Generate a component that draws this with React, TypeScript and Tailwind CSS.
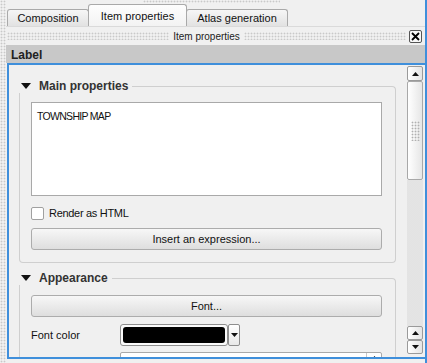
import React from "react";

const font = "font-['Liberation_Sans',Arial,sans-serif]";
const dots = "bg-[radial-gradient(circle,#c9c9c9_0.8px,transparent_1.1px)] bg-[length:3px_3px]";

function DownTri({ w = 10, h = 6 }: { w?: number; h?: number }) {
  return (
    <svg width={w} height={h} viewBox={`0 0 ${w} ${h}`} className="shrink-0">
      <polygon points={`0,0 ${w},0 ${w / 2},${h}`} fill="#111" />
    </svg>
  );
}

function UpTri({ w = 7, h = 4 }: { w?: number; h?: number }) {
  return (
    <svg width={w} height={h} viewBox={`0 0 ${w} ${h}`} className="shrink-0">
      <polygon points={`0,${h} ${w},${h} ${w / 2},0`} fill="#111" />
    </svg>
  );
}

function Tab({ label, active, w }: { label: string; active?: boolean; w: string }) {
  return active ? (
    <div className={`${w} h-[22px] flex justify-center items-start pt-[3px] border border-b-0 border-[#a9a9a9] rounded-t-[3px] bg-[linear-gradient(#fdfdfd,#f3f3f3)] -mx-px z-10 text-[11px] text-[#111]`}>
      {label}
    </div>
  ) : (
    <div className={`${w} h-[17px] flex justify-center items-center border border-b-0 border-[#a9a9a9] rounded-t-[3px] bg-[linear-gradient(#f6f6f6,#e2e2e2)] text-[11px] text-[#111]`}>
      {label}
    </div>
  );
}

function GroupBox({ title, children }: { title: string; children: React.ReactNode }) {
  return (
    <div className="flex flex-col">
      <div className="flex items-center h-[14px]">
        <div className="pl-[2px] pr-[8px]">
          <DownTri />
        </div>
        <div className="font-bold text-[12px] text-[#333] pr-[4px]">{title}</div>
        <div className="flex-1 self-end h-[7px] border-t border-r border-[#cfcfcf] rounded-tr-[4px]" />
      </div>
      <div className="border-l border-r border-b border-[#cfcfcf] rounded-b-[4px] pl-[11px] pr-[13px]">
        {children}
      </div>
    </div>
  );
}

function PushButton({ label }: { label: string }) {
  return (
    <div className="h-[22px] flex items-center justify-center border border-[#acacac] rounded-[3px] bg-[linear-gradient(#f7f7f7,#dedede)] text-[11px] text-[#111]">
      {label}
    </div>
  );
}

function ScrollBtn({ up }: { up?: boolean }) {
  return (
    <div className="h-[14px] w-[16px] flex items-center justify-center border border-[#9a9a9a] rounded-[2px] bg-[linear-gradient(90deg,#ffffff,#e4e4e4)]">
      {up ? <UpTri /> : <DownTri w={7} h={4} />}
    </div>
  );
}

export default function App() {
  return (
    <div className={`w-[427px] h-[363px] overflow-hidden flex bg-[#f0f0f0] border-r-2 border-[#3f8fdb] ${font}`}>
      <div className={`w-[6px] h-full ${dots}`} />
      <div className="w-[419px] flex flex-col">
        <div className="h-[4px] flex">
          <div className={`ml-[137px] w-[137px] h-[3px] ${dots}`} />
        </div>
        {/* tabs */}
        <div className="h-[23px] flex items-end pl-px border-b border-[#dadada]">
          <Tab label="Composition" w="w-[82px]" />
          <Tab label="Item properties" w="w-[99px]" active />
          <Tab label="Atlas generation" w="w-[102px]" />
        </div>
        {/* dock title */}
        <div className="h-[18px] flex items-center">
          <div className="flex-1 flex items-center gap-[4px] pl-px">
            <div className={`flex-1 h-[8px] ${dots}`} />
            <div className="text-[10px] text-[#222]">Item properties</div>
            <div className={`flex-1 h-[8px] ${dots}`} />
          </div>
          <div className="ml-[3px] mr-[3px] w-[13px] h-[13px] border border-[#555] rounded-[2px] bg-[#f8f8f8] flex items-center justify-center">
            <svg width="9" height="9" viewBox="0 0 9 9">
              <path d="M1 1 L8 8 M8 1 L1 8" stroke="#000" strokeWidth="1.8" />
            </svg>
          </div>
        </div>
        {/* Label bar */}
        <div className="h-[18px] bg-[#c8c8c8] flex items-center pl-[5px] pt-[2px] font-bold text-[12px] text-[#222]">
          Label
        </div>
        {/* scroll area */}
        <div className="h-[296px] ml-px flex border-l-2 border-t-2 border-b-2 border-[#3f8fdb]">
          <div className="flex-1 overflow-hidden pl-[10px] pr-[11px] pt-[14px] flex flex-col">
            <GroupBox title="Main properties">
              <div className="mt-[9px] h-[94px] bg-white border border-[#a9a9a9] pl-[5px] pt-[6px] text-[10.5px] tracking-[-0.7px] text-[#111]">
                TOWNSHIP MAP
              </div>
              <div className="mt-[11px] h-[12px] flex items-center gap-[5px]">
                <div className="w-[13px] h-[13px] bg-white border border-[#a0a0a0] rounded-[2px]" />
                <div className="text-[11px] text-[#111] tracking-[-0.3px]">Render as HTML</div>
              </div>
              <div className="mt-[9px] mb-[12px]">
                <PushButton label="Insert an expression..." />
              </div>
            </GroupBox>
            <div className="mt-[8px]">
              <GroupBox title="Appearance">
                <div className="mt-[10px]">
                  <PushButton label="Font..." />
                </div>
                <div className="mt-[7px] h-[22px] flex items-center">
                  <div className="w-[89px] text-[11px] text-[#111]">Font color</div>
                  <div className="w-[108px] h-[22px] border border-[#8e8e8e] rounded-[3px] bg-[#fafafa] p-[2px]">
                    <div className="w-full h-full bg-black rounded-[3px]" />
                  </div>
                  <div className="w-[12px] h-[22px] border border-[#8e8e8e] rounded-[2px] bg-[linear-gradient(#ffffff,#e8e8e8)] flex justify-center pt-[8px]">
                    <DownTri w={7} h={4} />
                  </div>
                </div>
                <div className="mt-[6px] ml-[89px] h-[20px] border border-[#a9a9a9] rounded-[2px] bg-white flex justify-end">
                  <div className="w-[15px] border-l border-[#c8c8c8] flex justify-center pt-[3px]">
                    <UpTri w={5} h={3} />
                  </div>
                </div>
              </GroupBox>
            </div>
          </div>
          {/* scrollbar */}
          <div className="w-[16px] mr-[2px] flex flex-col pt-px pb-[3px]">
            <div className="h-[15px] w-[16px] flex items-center justify-center border border-[#9a9a9a] rounded-[2px] bg-[linear-gradient(90deg,#ffffff,#e4e4e4)]">
              <UpTri />
            </div>
            <div className="h-[99px] border border-[#a8a8a8] rounded-[2px] bg-[linear-gradient(90deg,#ffffff,#e6e6e6)] flex items-center justify-center">
              <div className="w-[9px] h-[20px] bg-[radial-gradient(circle,#b0b0b0_0.8px,transparent_1.1px)] bg-[length:3px_3px]" />
            </div>
            <div className="flex-1 bg-[radial-gradient(circle,#e3e3e3_0.7px,transparent_1px)] bg-[length:2px_2px] bg-white" />
            <ScrollBtn up />
            <ScrollBtn />
          </div>
        </div>
      </div>
    </div>
  );
}
